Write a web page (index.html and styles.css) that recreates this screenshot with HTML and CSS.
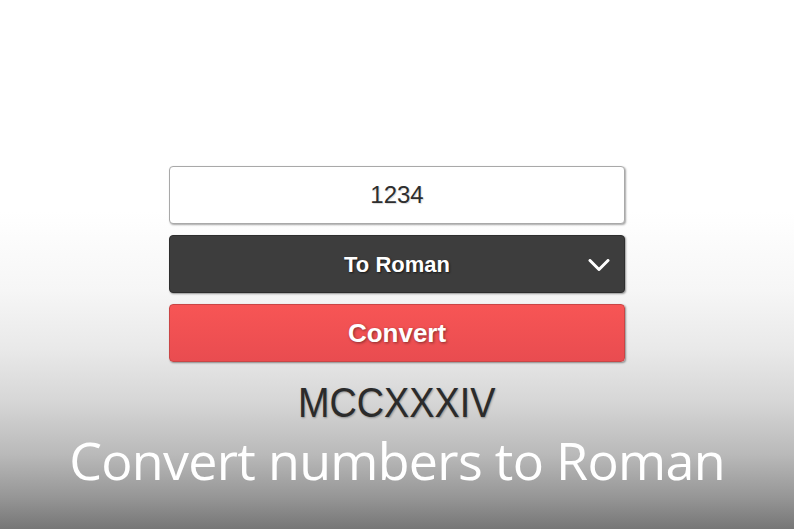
FILE: index.html
```html
<!DOCTYPE html>
<html>
<head>
    <meta charset="UTF-8">
    <title>Roman Numeral Converter</title>
    <link rel="stylesheet" href="styles.css">
</head>
<body>
    <div class="converter">
        <input type="text" id="numberInput" class="number-input" value="1234">

        <div class="select-wrap">
            <select id="direction" class="direction-select">
                <option value="roman" selected>To Roman</option>
                <option value="arabic">To Arabic</option>
            </select>
            <svg class="select-arrow" viewBox="0 0 22 12" fill="none" stroke="currentColor" stroke-width="3" stroke-linecap="round" stroke-linejoin="round">
                <polyline points="2 1.5 11 10.5 20 1.5"/>
            </svg>
        </div>

        <button id="convertButton" class="convert-button">Convert</button>

        <div class="result"><span id="result">MCCXXXIV</span></div>
    </div>

    <!-- キャプション -->
    <h1 class="caption">Convert numbers to Roman</h1>
</body>
</html>
```

FILE: styles.css
```css
html, body {
    height: 100%;
}

body {
    margin: 0;
    overflow: hidden;
    font-family: "Liberation Sans", Arial, sans-serif;
    background: linear-gradient(to bottom,
        #ffffff 0%,
        #ffffff 40%,
        #f6f6f6 55%,
        #e9e9e9 66%,
        #d6d6d6 76%,
        #b9b9b9 86%,
        #969696 94%,
        #767676 100%);
}

.converter {
    width: 456px;
    margin: 0 auto;
    padding-top: 166px;
    display: flex;
    flex-direction: column;
    gap: 11px;
}

.number-input {
    box-sizing: border-box;
    height: 58px;
    width: 100%;
    padding: 0 10px;
    border: 1px solid #a9a9a9;
    border-radius: 4px;
    background-color: #fff;
    box-shadow: 1px 1px 2px rgba(0, 0, 0, 0.35);
    font-family: "Liberation Sans", Arial, sans-serif;
    font-size: 24px;
    color: #2e2e2e;
    text-align: center;
    text-shadow: 1px 1px 1px rgba(0, 0, 0, 0.15);
    outline: none;
}

/* セレクトボックス */
.select-wrap {
    position: relative;
}

.direction-select {
    box-sizing: border-box;
    width: 100%;
    height: 58px;
    border: 1px solid #2e2e2e;
    border-radius: 4px;
    background-color: #3d3d3d;
    box-shadow: 1px 1px 2px rgba(0, 0, 0, 0.4);
    appearance: none;
    -webkit-appearance: none;
    font-family: "Liberation Sans", Arial, sans-serif;
    font-size: 22px;
    font-weight: bold;
    color: #fff;
    text-align: center;
    text-align-last: center;
    text-shadow: 1px 1px 2px rgba(0, 0, 0, 0.6);
    outline: none;
}

.select-arrow {
    position: absolute;
    right: 15px;
    top: 24px;
    width: 22px;
    height: 12px;
    color: #fff;
    pointer-events: none;
}

.convert-button {
    box-sizing: border-box;
    height: 58px;
    width: 100%;
    border: 1px solid #c94545;
    border-radius: 4px;
    background: linear-gradient(to bottom, #f75555, #e94c50);
    box-shadow: 1px 1px 2px rgba(0, 0, 0, 0.4);
    font-family: "Liberation Sans", Arial, sans-serif;
    font-size: 26px;
    font-weight: bold;
    color: #fff;
    text-shadow: 1px 1px 3px rgba(0, 0, 0, 0.45);
    cursor: pointer;
}

.result {
    margin-top: 9px;
    text-align: center;
    line-height: 1;
}

.result span {
    display: inline-block;
    font-size: 42px;
    color: #2b2b2b;
    text-shadow: 1px 1px 2px rgba(0, 0, 0, 0.3);
    transform: scaleX(0.9);
}

.caption {
    margin: 5px 0 0 0;
    text-align: center;
    font-family: "Open Sans", sans-serif;
    font-weight: 400;
    font-size: 52px;
    letter-spacing: -0.7px;
    line-height: 1.2;
    color: #fff;
}
```
